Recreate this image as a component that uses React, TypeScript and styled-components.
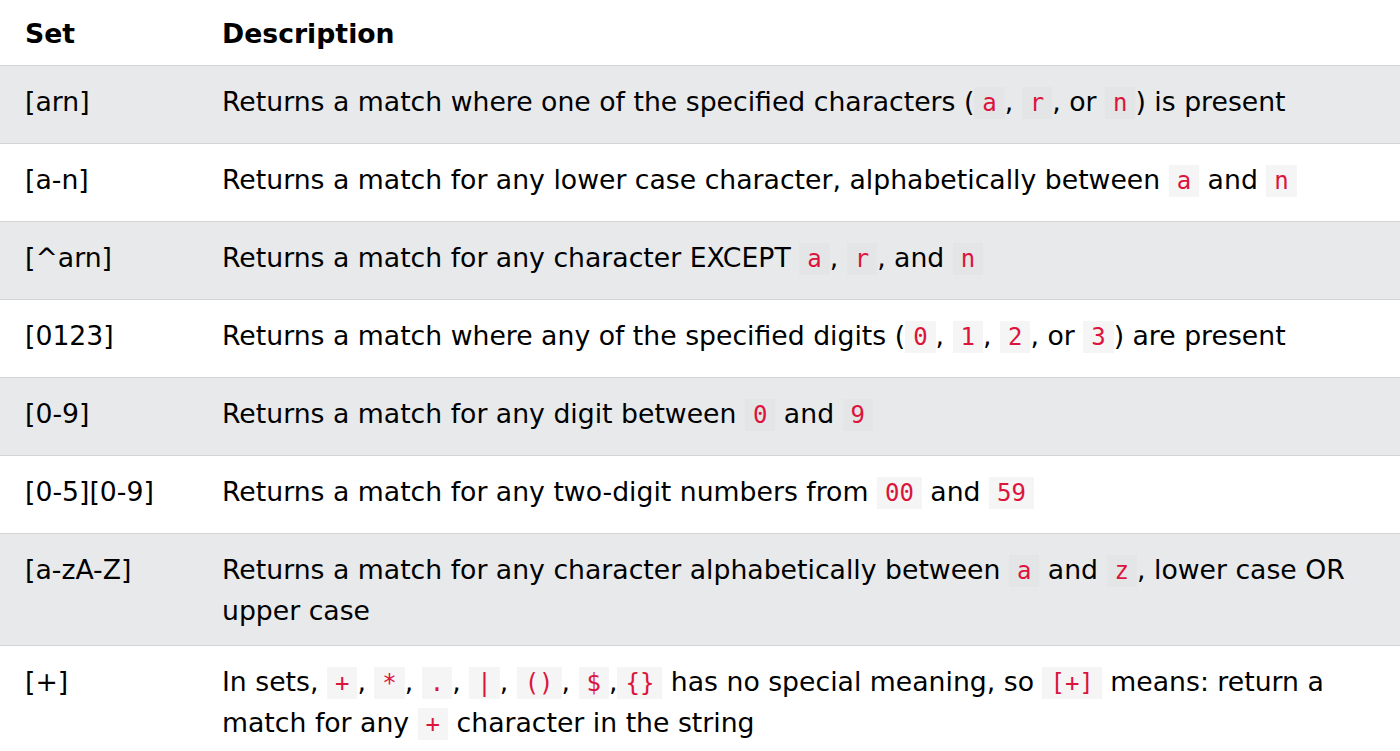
import React from "react";
import styled, { createGlobalStyle } from "styled-components";

const Global = createGlobalStyle`
  html, body { margin: 0; padding: 0; background: #ffffff; }
  body { font-family: "DejaVu Sans", Verdana, sans-serif; color: #000; }
`;

const Table = styled.table`
  width: 100%;
  border-collapse: collapse;
  font-family: "DejaVu Sans", Verdana, sans-serif;
  font-size: 26.7px;
  line-height: 41px;
`;

const HeadCell = styled.th<{ $first?: boolean }>`
  text-align: left;
  font-weight: bold;
  padding: 13px 10px 11px ${(p) => (p.$first ? "25px" : "0")};
  width: ${(p) => (p.$first ? "187px" : "auto")};
  border-bottom: 1px solid #d5d5d5;
`;

const Row = styled.tr<{ $alt: boolean }>`
  height: 78px;
  background: ${(p) => (p.$alt ? "#e7e9eb" : "#ffffff")};
  border-bottom: 1px solid #d5d5d5;
`;

const Cell = styled.td<{ $first?: boolean }>`
  vertical-align: top;
  padding: 15px ${(p) => (p.$first ? "10px" : "40px")} 14px ${(p) => (p.$first ? "25px" : "0")};
`;

const Code = styled.span`
  font-family: "DejaVu Sans Mono", "Liberation Mono", monospace;
  font-size: 24px;
  line-height: 1;
  color: #dc143c;
  background: rgba(222, 222, 222, 0.3);
  padding: 2px 8px;
`;

type RowData = { set: string; desc: React.ReactNode };

const rows: RowData[] = [
  {
    set: "[arn]",
    desc: (
      <>
        Returns a match where one of the specified characters (<Code>a</Code>, <Code>r</Code>, or <Code>n</Code>) is present
      </>
    ),
  },
  {
    set: "[a-n]",
    desc: (
      <>
        Returns a match for any lower case character, alphabetically between <Code>a</Code> and <Code>n</Code>
      </>
    ),
  },
  {
    set: "[^arn]",
    desc: (
      <>
        Returns a match for any character EXCEPT <Code>a</Code>, <Code>r</Code>, and <Code>n</Code>
      </>
    ),
  },
  {
    set: "[0123]",
    desc: (
      <>
        Returns a match where any of the specified digits (<Code>0</Code>, <Code>1</Code>, <Code>2</Code>, or <Code>3</Code>) are present
      </>
    ),
  },
  {
    set: "[0-9]",
    desc: (
      <>
        Returns a match for any digit between <Code>0</Code> and <Code>9</Code>
      </>
    ),
  },
  {
    set: "[0-5][0-9]",
    desc: (
      <>
        Returns a match for any two-digit numbers from <Code>00</Code> and <Code>59</Code>
      </>
    ),
  },
  {
    set: "[a-zA-Z]",
    desc: (
      <>
        Returns a match for any character alphabetically between <Code>a</Code> and <Code>z</Code>, lower case OR upper case
      </>
    ),
  },
  {
    set: "[+]",
    desc: (
      <>
        In sets, <Code>+</Code>, <Code>*</Code>, <Code>.</Code>, <Code>|</Code>, <Code>()</Code>, <Code>$</Code>,<Code>{"{}"}</Code> has no special meaning, so <Code>[+]</Code> means: return a match for any <Code>+</Code> character in the string
      </>
    ),
  },
];

export default function App() {
  return (
    <>
      <Global />
      <Table>
        <thead>
          <tr>
            <HeadCell $first>Set</HeadCell>
            <HeadCell>Description</HeadCell>
          </tr>
        </thead>
        <tbody>
          {rows.map((r, i) => (
            <Row key={r.set} $alt={i % 2 === 0}>
              <Cell $first>{r.set}</Cell>
              <Cell>{r.desc}</Cell>
            </Row>
          ))}
        </tbody>
      </Table>
    </>
  );
}
